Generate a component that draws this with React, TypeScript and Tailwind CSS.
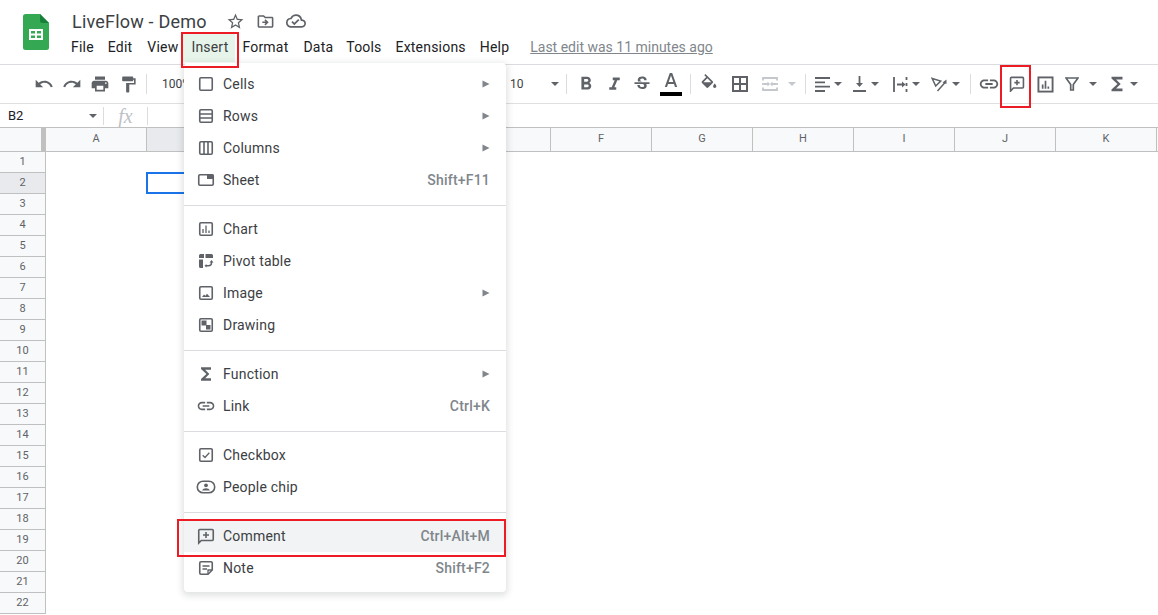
import React from "react";
import {
  MdUndo, MdRedo, MdPrint, MdFormatPaint, MdFormatBold, MdFormatItalic, MdStrikethroughS,
  MdLink, MdFunctions, MdStarBorder, MdOutlineDriveFileMove, MdOutlineCloudDone,
} from "react-icons/md";

const ink = "#5f6368";

function Caret({ color = ink }: { color?: string }) {
  return (
    <svg width="8" height="4" viewBox="0 0 8 4" className="shrink-0">
      <path d="M0 0h8L4 4z" fill={color} />
    </svg>
  );
}

function Sep({ className }: { className: string }) {
  return (
    <div className={`flex h-full items-center justify-center ${className}`}>
      <div className="h-[20px] w-px bg-[#dadce0]" />
    </div>
  );
}

function Btn({ className, children, caret }: { className: string; children: React.ReactNode; caret?: boolean }) {
  return (
    <div className={`flex h-full shrink-0 items-center justify-center text-[#5f6368] ${className}`}>
      {children}
      {caret && <Caret />}
    </div>
  );
}

function I18({ children }: { children: React.ReactNode }) {
  return (
    <svg width="18" height="18" viewBox="0 0 18 18" fill="none" stroke={ink} strokeWidth="1.6" className="shrink-0 overflow-visible">
      {children}
    </svg>
  );
}

const box = <rect x="2.750" y="2.750" width="12.500" height="12.500" rx="1.200" />;

const commentIcon = (
  <I18>
    <path d="M1.750 16V3.500a1 1 0 0 1 1-1h12.500a1 1 0 0 1 1 1v9a1 1 0 0 1-1 1H4.300z" />
    <path d="M9 5v6M6 8h6" />
  </I18>
);

const icons: Record<string, React.ReactNode> = {
  cells: <I18>{box}</I18>,
  rows: <I18>{box}<path d="M3 7h12M3 11h12" /></I18>,
  columns: <I18>{box}<path d="M7 3v12M11 3v12" /></I18>,
  sheet: (
    <I18>
      <rect x="1.750" y="3.750" width="14.500" height="10.500" rx="1.200" />
      <path d="M10 3.500h6.500V8H10z" fill={ink} stroke="none" />
    </I18>
  ),
  chart: <I18>{box}<path d="M6 13V9M9 13V5.500M12 13v-2.500" strokeWidth="1.300" /></I18>,
  pivot: (
    <I18>
      <path d="M2 3.500A1.500 1.500 0 0 1 3.500 2H7v4H2zM8.500 2h6A1.500 1.500 0 0 1 16 3.500V6H8.500zM2 7.500h4V16H3.500A1.500 1.500 0 0 1 2 14.500z" fill={ink} stroke="none" />
      <path d="M9.500 15.500l-2-1.800 2-1.800zM14.500 8l2 2.500h-4z" fill={ink} stroke="none" />
      <path d="M9 13.700h2.500a3 3 0 0 0 3-3V10" strokeWidth="1.500" />
    </I18>
  ),
  image: <I18>{box}<path d="M5 13l2-2.500 1.500 1.300 1.500-2 3 3.200z" fill={ink} stroke="none" /></I18>,
  drawing: <I18>{box}<rect x="4.500" y="4.500" width="5" height="5" fill={ink} stroke="none" /><rect x="9" y="9" width="4.500" height="4.500" fill={ink} stroke="none" /></I18>,
  func: <MdFunctions size={20} color={ink} className="-mx-px shrink-0" />,
  link: <MdLink size={20} color={ink} className="-mx-px shrink-0" />,
  checkbox: <I18>{box}<path d="M5.700 9.200l2.300 2.300 4.300-4.800" strokeWidth="1.300" /></I18>,
  people: (
    <I18>
      <rect x="0.300" y="3.250" width="17.400" height="11.500" rx="5.750" />
      <circle cx="9" cy="7.300" r="1.900" fill={ink} stroke="none" />
      <path d="M5.200 12.600c.4-1.700 2.200-2.400 3.800-2.400s3.400.7 3.800 2.400z" fill={ink} stroke="none" />
    </I18>
  ),
  comment: commentIcon,
  note: (
    <I18>
      <path d="M3.950 2.750h10.100a1.200 1.200 0 0 1 1.200 1.200V11l-4.250 4.250h-7.050a1.200 1.200 0 0 1-1.200-1.200V3.950a1.200 1.200 0 0 1 1.200-1.200z" />
      <path d="M5.500 7h7M5.500 10h4.500M11 15v-4h4" strokeWidth="1.300" />
    </I18>
  ),
};

function Item({ icon, label, shortcut, arrow, active }: { icon: string; label: string; shortcut?: string; arrow?: boolean; active?: boolean }) {
  return (
    <div className={`flex h-[32px] items-center pl-[13px] pr-[16px] ${active ? "bg-[#f1f3f4]" : ""}`}>
      <div className="flex w-[18px] justify-center">{icons[icon]}</div>
      <span className="ml-[8px] grow text-[14px] tracking-[.2px] text-[#3c4043]">{label}</span>
      {shortcut && <span className="text-[14px] font-medium tracking-[.2px] text-[#80868b]">{shortcut}</span>}
      {arrow && (
        <svg width="8" height="8" viewBox="0 0 8 8">
          <path d="M0.500 0.500l7 3.500-7 3.500z" fill="#80868b" />
        </svg>
      )}
    </div>
  );
}

const Divider = () => <div className="mb-[7px] mt-[9px] h-px bg-[#dadce0]" />;

const columns = [
  ["A", ""], ["B", "bg-[#e8eaed]"], ["C", ""], ["D", ""], ["E", ""],
  ["F", ""], ["G", ""], ["H", ""], ["I", ""], ["J", ""], ["K", ""],
];

export default function App() {
  const rows = Array.from({ length: 22 }, (_, i) => i + 1);
  return (
    <div className="relative h-[615px] w-[1158px] overflow-hidden bg-white font-['Roboto',sans-serif]">
      {/* title bar */}
      <header className="flex h-[65px] border-b border-[#dadce0]">
        <div className="w-[64px] shrink-0 pl-[23px] pt-[14px]">
          <svg width="26" height="36" viewBox="0 0 26 36">
            <path d="M2.500 0H17l9 9v24.500a2.500 2.500 0 0 1-2.500 2.500h-21A2.500 2.500 0 0 1 0 33.500v-31A2.500 2.500 0 0 1 2.500 0z" fill="#34a853" />
            <path d="M17 0l9 9h-6.500A2.500 2.500 0 0 1 17 6.500z" fill="#188038" />
            <path d="M6 15h14v11H6zm2 2v2.500h4V17zm6 0v2.500h4V17zm-6 4.500V24h4v-2.500zm6 0V24h4v-2.500z" fill="#fff" fillRule="evenodd" />
          </svg>
        </div>
        <div className="flex min-w-0 grow flex-col">
          <div className="flex h-[35px] items-end pl-[8px] text-[#5f6368]">
            <span className="mb-[1px] text-[18px] leading-[24px] tracking-[.2px] text-[#3c4043]">LiveFlow - Demo</span>
            <div className="mb-[4px] ml-[19px] flex items-center gap-[11px]">
              <MdStarBorder size={19} />
              <MdOutlineDriveFileMove size={19} />
              <MdOutlineCloudDone size={20} />
            </div>
          </div>
          <nav className="flex h-[24px] items-center text-[14px] tracking-[.2px] text-[#202124]">
            <span className="px-[7px]">File</span>
            <span className="pl-[7px] pr-[8px]">Edit</span>
            <span className="pl-[7px] pr-[5px]">View</span>
            <span className="-mb-[2px] flex h-[28px] items-center bg-[#e6f4ea] pb-[2px] pl-[8px] pr-[7px] text-[#3c4043]">Insert</span>
            <span className="pl-[7px] pr-[8px]">Format</span>
            <span className="pl-[7px] pr-[6px]">Data</span>
            <span className="px-[7px]">Tools</span>
            <span className="px-[7px]">Extensions</span>
            <span className="px-[7px]">Help</span>
            <span className="ml-[14px] tracking-normal text-[#80868b] underline">Last edit was 11 minutes ago</span>
          </nav>
        </div>
      </header>

      {/* toolbar */}
      <div className="flex h-[39px] items-center border-b border-[#e0e0e0] pl-[30px]">
        <Btn className="w-[28px]"><MdUndo size={20} /></Btn>
        <Btn className="w-[28px]"><MdRedo size={20} /></Btn>
        <Btn className="w-[28px]"><MdPrint size={20} /></Btn>
        <Btn className="w-[28px]"><MdFormatPaint size={19} /></Btn>
        <Sep className="w-[8px]" />
        <div className="w-[60px] shrink-0 pl-[12px] text-[12px] text-[#3c4043]">100%</div>
        <div className="w-[296px] shrink-0" />
        <div className="flex w-[54px] shrink-0 items-center justify-between pl-[4px] pr-[1px] text-[12px] text-[#3c4043]">
          <span>10</span>
          <Caret />
        </div>
        <Sep className="w-[12px]" />
        <Btn className="w-[28px]"><MdFormatBold size={22} /></Btn>
        <Btn className="w-[28px]"><MdFormatItalic size={21} /></Btn>
        <Btn className="w-[28px]"><MdStrikethroughS size={20} /></Btn>
        <div className="flex h-full w-[29px] shrink-0 justify-center pt-[7px]">
          <svg width="22" height="25" viewBox="0 0 22 25">
            <path d="M9.800 1L4.800 15h2.200l1-3h6l1 3h2.200L12.200 1zM8.700 10L11 3.500 13.300 10z" fill={ink} fillRule="evenodd" />
            <rect y="20" width="22" height="4" fill="#000" />
          </svg>
        </div>
        <Sep className="w-[10px]" />
        <Btn className="w-[28px]">
          <svg width="20" height="18" viewBox="0 0 24 22" className="-mt-[3px]">
            <path d="M16.560 8.940L7.620 0 6.210 1.410l2.380 2.380-5.150 5.150c-.59.59-.59 1.540 0 2.120l5.500 5.500c.29.29.68.44 1.060.44s.77-.15 1.060-.44l5.500-5.500c.59-.58.59-1.530 0-2.110zM5.210 10L10 5.210 14.790 10H5.210zM19 11.500s-2 2.170-2 3.500c0 1.100.9 2 2 2s2-.9 2-2c0-1.330-2-3.500-2-3.500z" fill={ink} />
          </svg>
        </Btn>
        <Btn className="ml-[3px] w-[28px]">
          <svg width="16" height="16" viewBox="0 0 16 16" fill="none" stroke={ink} strokeWidth="2">
            <rect x="1" y="1" width="14" height="14" />
            <path d="M8 1v14M1 8h14" />
          </svg>
        </Btn>
        <Btn className="ml-[2px] w-[28px]">
          <svg width="16" height="14" viewBox="0 0 16 14" fill="none" stroke="#c4c7cb" strokeWidth="1.800">
            <path d="M1 3.500V1h14v2.500M1 10.500V13h14v-2.500M1 6v2M15 6v2M2 7h4M10 7h4" />
            <path d="M5.500 4.500L8 7 5.500 9.500zM10.500 4.500L8 7l2.500 2.500z" fill="#c4c7cb" stroke="none" />
          </svg>
        </Btn>
        <Btn className="w-[16px]"><Caret color="#c4c7cb" /></Btn>
        <Sep className="w-[10px]" />
        <Btn className="w-[36px] gap-[4px]" caret>
          <svg width="15" height="15" viewBox="0 0 15 15" fill="none" stroke={ink} strokeWidth="1.800">
            <path d="M0 1h15M0 5.300h10M0 9.600h15M0 14h10" />
          </svg>
        </Btn>
        <Btn className="ml-[2px] w-[36px] gap-[5px]" caret>
          <svg width="13" height="16" viewBox="0 0 13 16" fill="none" stroke={ink} strokeWidth="1.800">
            <path d="M6.500 0v8M0 15h13" />
            <path d="M3 7h7l-3.500 4z" fill={ink} stroke="none" />
          </svg>
        </Btn>
        <Btn className="ml-[5px] w-[34px] gap-[4px]" caret>
          <svg width="15" height="15" viewBox="0 0 15 15" fill="none" stroke={ink} strokeWidth="1.800">
            <path d="M1 0v15M13.500 0v3M13.500 6v3M13.500 12v3M4 7.500h6" />
            <path d="M9 4.500l3.500 3-3.500 3z" fill={ink} stroke="none" />
          </svg>
        </Btn>
        <Btn className="ml-[4px] w-[36px] gap-[5px]" caret>
          <svg width="16" height="15" viewBox="0 0 16 15" fill="none" stroke={ink} strokeWidth="1.500">
            <path d="M1.200 1.500l8.500 2.500-5 5zM6.500 14l8-9" />
            <path d="M15.500 2.500v4.500l-4-1.500z" fill={ink} stroke="none" />
          </svg>
        </Btn>
        <Sep className="ml-[2px] w-[10px]" />
        <Btn className="w-[28px]"><MdLink size={22} /></Btn>
        <Btn className="w-[28px]">
          <svg width="16" height="16" viewBox="0 0 18 18" fill="none" stroke={ink} strokeWidth="1.800">
            <path d="M1.750 17V2.500a1 1 0 0 1 1-1h12.500a1 1 0 0 1 1 1v10a1 1 0 0 1-1 1H5z" />
            <path d="M9 4.500v6M6 7.500h6" />
          </svg>
        </Btn>
        <Btn className="w-[28px]">
          <svg width="17" height="17" viewBox="0 0 18 18" fill="none" stroke={ink} strokeWidth="2">
            <rect x="1.500" y="1.500" width="15" height="15" />
            <path d="M6 13.500V9M9 13.500V5M12 13.500v-2.500" strokeWidth="1.800" />
          </svg>
        </Btn>
        <Btn className="ml-[1px] w-[42px] gap-[10px]" caret>
          <svg width="14" height="14" viewBox="0 0 14 14" fill="none" stroke={ink} strokeWidth="1.700">
            <path d="M1 1h12L8.300 7.500V13H5.700V7.500z" />
          </svg>
        </Btn>
        <Btn className="ml-[2px] w-[36px] gap-[2px]" caret><MdFunctions size={22} /></Btn>
      </div>

      {/* formula bar */}
      <div className="flex h-[24px] items-center border-b border-[#c0c0c0]">
        <div className="flex w-[103px] shrink-0 items-center justify-between pl-[8px] pr-[6px] text-[13px] text-[#202124]">
          <span>B2</span>
          <Caret />
        </div>
        <div className="h-[18px] w-px bg-[#dadce0]" />
        <span className="w-[43px] text-center font-['Liberation_Serif',serif] text-[20px] italic leading-[20px] text-[#bdc1c6]">fx</span>
        <div className="h-[18px] w-px bg-[#dadce0]" />
      </div>

      {/* column headers */}
      <div className="flex h-[24px] border-b border-[#c0c0c0] bg-[#f8f9fa]">
        <div className="flex h-full w-[46px] shrink-0 justify-end border-r border-[#c0c0c0]">
          <div className="w-[4px] bg-[#c0c0c0]" />
        </div>
        {columns.map(([name, cls]) => (
          <div key={name} className={`flex w-[101px] shrink-0 items-center justify-center border-r border-[#c0c0c0] text-[11px] text-[#5f6368] ${cls}`}>
            {name}
          </div>
        ))}
      </div>

      {/* row headers */}
      <div className="w-[46px]">
        {rows.map((r) => (
          <div key={r} className={`flex h-[21px] items-center justify-center border-b border-r border-[#c0c0c0] text-[11px] text-[#5f6368] ${r === 2 ? "bg-[#e8eaed]" : "bg-[#f8f9fa]"}`}>
            {r}
          </div>
        ))}
      </div>

      {/* selected cell */}
      <div className="absolute left-[146px] top-[172px] h-[22px] w-[102px] border-2 border-[#1a73e8]" />

      {/* Insert menu */}
      <div className="absolute left-[184px] top-[63px] w-[322px] rounded-[4px] bg-white pb-[8px] pt-[5px] shadow-[0_2px_6px_2px_rgba(60,64,67,0.15)]">
        <Item icon="cells" label="Cells" arrow />
        <Item icon="rows" label="Rows" arrow />
        <Item icon="columns" label="Columns" arrow />
        <Item icon="sheet" label="Sheet" shortcut="Shift+F11" />
        <Divider />
        <Item icon="chart" label="Chart" />
        <Item icon="pivot" label="Pivot table" />
        <Item icon="image" label="Image" arrow />
        <Item icon="drawing" label="Drawing" />
        <Divider />
        <Item icon="func" label="Function" arrow />
        <Item icon="link" label="Link" shortcut="Ctrl+K" />
        <Divider />
        <Item icon="checkbox" label="Checkbox" />
        <Item icon="people" label="People chip" />
        <Divider />
        <Item icon="comment" label="Comment" shortcut="Ctrl+Alt+M" active />
        <Item icon="note" label="Note" shortcut="Shift+F2" />
      </div>

      {/* red annotation boxes */}
      <div className="absolute left-[181px] top-[32px] h-[36px] w-[58px] border-2 border-[#ed1c24]" />
      <div className="absolute left-[1000px] top-[65px] h-[43px] w-[31px] border-2 border-[#ed1c24]" />
      <div className="absolute left-[177px] top-[519px] h-[38px] w-[329px] border-2 border-[#ed1c24]" />
    </div>
  );
}
